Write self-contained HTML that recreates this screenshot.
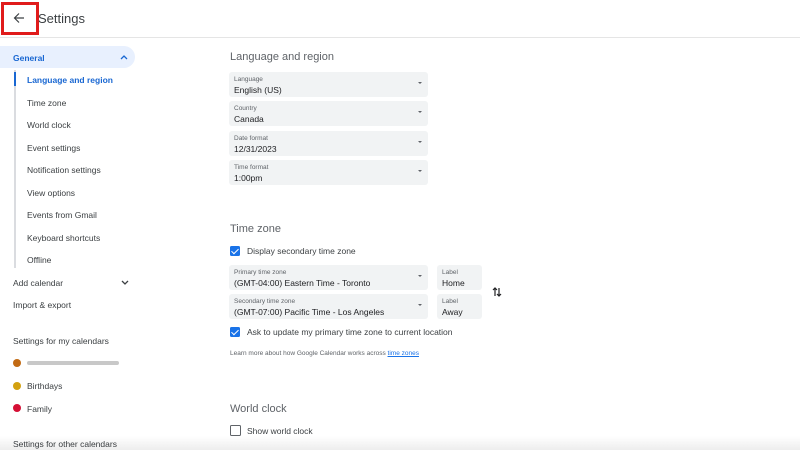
<!DOCTYPE html>
<html><head><style>
*{margin:0;padding:0;box-sizing:border-box}
body{width:800px;height:450px;overflow:hidden;background:#fff;font-family:"Liberation Sans",sans-serif;color:#3c4043;position:relative}
.a{position:absolute;white-space:nowrap}
.nav{font-size:8.5px;color:#3c4043}
.field{position:absolute;background:#f1f3f4;border-radius:3px}
.field .l{position:absolute;left:5px;top:4px;font-size:6.5px;color:#5f6368}
.field .v{position:absolute;left:5px;top:13px;font-size:8.5px;color:#202124}
.field .c{position:absolute;right:6px;top:10px;width:0;height:0;border-left:2px solid transparent;border-right:2px solid transparent;border-top:2.5px solid #5f6368}
h2{position:absolute;font-weight:normal;font-size:11px;color:#5f6368}
.cb{position:absolute;width:10px;height:10px;background:#1a73e8;border-radius:1.5px}
.cb:after{content:"";position:absolute;left:3px;top:1px;width:3px;height:6px;border:solid #fff;border-width:0 1.5px 1.5px 0;transform:rotate(45deg)}
.dot{position:absolute;width:8px;height:8px;border-radius:50%}
</style></head><body>
<div class="a" style="left:0;top:37px;width:800px;height:1px;background:#e5e5e5"></div>
<div class="a" style="left:1px;top:2px;width:38px;height:33px;border:3px solid #e01b1b"></div>
<svg class="a" style="left:13px;top:12px" width="12" height="12" viewBox="0 0 12 12"><path d="M11 6H1.5M6 1.5L1.5 6L6 10.5" stroke="#3c4043" stroke-width="1.2" fill="none"/></svg>
<div class="a" style="left:38px;top:11px;font-size:13px;color:#3c4043">Settings</div>
<div class="a" style="left:0;top:46px;width:135px;height:22px;background:#e8f0fe;border-radius:0 11px 11px 0"></div>
<div class="a nav" style="left:13px;top:53px;color:#1967d2;font-weight:bold">General</div>
<svg class="a" style="left:120px;top:54px" width="8" height="6"><path d="M1 5L4 2L7 5" stroke="#1967d2" stroke-width="1.3" fill="none"/></svg>
<div class="a" style="left:14px;top:70px;width:1.5px;height:198px;background:#dadce0"></div>
<div class="a" style="left:14px;top:72px;width:2px;height:14px;background:#1967d2"></div>
<div class="a nav" style="left:27px;top:75px;color:#1967d2;font-weight:bold">Language and region</div>
<div class="a nav" style="left:27px;top:98px">Time zone</div>
<div class="a nav" style="left:27px;top:120px">World clock</div>
<div class="a nav" style="left:27px;top:143px">Event settings</div>
<div class="a nav" style="left:27px;top:165px">Notification settings</div>
<div class="a nav" style="left:27px;top:188px">View options</div>
<div class="a nav" style="left:27px;top:210px">Events from Gmail</div>
<div class="a nav" style="left:27px;top:233px">Keyboard shortcuts</div>
<div class="a nav" style="left:27px;top:255px">Offline</div>
<div class="a nav" style="left:13px;top:278px">Add calendar</div>
<svg class="a" style="left:121px;top:280px" width="8" height="6"><path d="M1 1L4 4L7 1" stroke="#3c4043" stroke-width="1.3" fill="none"/></svg>
<div class="a nav" style="left:13px;top:300px">Import &amp; export</div>
<div class="a nav" style="left:13px;top:336px;font-size:8.5px">Settings for my calendars</div>
<div class="dot" style="left:13px;top:359px;background:#c26a13"></div>
<div class="a" style="left:27px;top:361px;width:92px;height:4px;background:#c8c8c8;border-radius:2px"></div>
<div class="dot" style="left:13px;top:382px;background:#d3a110"></div>
<div class="a nav" style="left:27px;top:381px">Birthdays</div>
<div class="dot" style="left:13px;top:404px;background:#d50f35"></div>
<div class="a nav" style="left:27px;top:404px">Family</div>
<div class="a nav" style="left:13px;top:439px">Settings for other calendars</div>

<h2 style="left:230px;top:51px">Language and region</h2>
<div class="field" style="left:229px;top:72px;width:199px;height:25px"><div class="l">Language</div><div class="v">English (US)</div><div class="c"></div></div>
<div class="field" style="left:229px;top:101px;width:199px;height:25px"><div class="l">Country</div><div class="v">Canada</div><div class="c"></div></div>
<div class="field" style="left:229px;top:131px;width:199px;height:25px"><div class="l">Date format</div><div class="v">12/31/2023</div><div class="c"></div></div>
<div class="field" style="left:229px;top:160px;width:199px;height:25px"><div class="l">Time format</div><div class="v">1:00pm</div><div class="c"></div></div>

<h2 style="left:230px;top:223px">Time zone</h2>
<div class="cb" style="left:230px;top:246px"></div>
<div class="a nav" style="left:247px;top:246px">Display secondary time zone</div>
<div class="field" style="left:229px;top:265px;width:199px;height:25px"><div class="l">Primary time zone</div><div class="v">(GMT-04:00) Eastern Time - Toronto</div><div class="c"></div></div>
<div class="field" style="left:437px;top:265px;width:45px;height:25px"><div class="l">Label</div><div class="v">Home</div></div>
<div class="field" style="left:229px;top:294px;width:199px;height:25px"><div class="l">Secondary time zone</div><div class="v">(GMT-07:00) Pacific Time - Los Angeles</div><div class="c"></div></div>
<div class="field" style="left:437px;top:294px;width:45px;height:25px"><div class="l">Label</div><div class="v">Away</div></div>
<svg class="a" style="left:492px;top:286px" width="10" height="12" viewBox="0 0 10 12"><path d="M3 10V2M1 4L3 2L5 4M7 2V10M5 8L7 10L9 8" stroke="#202124" stroke-width="1.2" fill="none"/></svg>
<div class="cb" style="left:230px;top:327px"></div>
<div class="a nav" style="left:247px;top:327px">Ask to update my primary time zone to current location</div>
<div class="a" style="left:230px;top:350px;font-size:6.5px;color:#5f6368">Learn more about how Google Calendar works across <span style="color:#1a73e8;text-decoration:underline">time zones</span></div>

<h2 style="left:230px;top:403px">World clock</h2>
<div class="a" style="left:230px;top:425px;width:11px;height:11px;border:1.5px solid #5f6368;border-radius:1.5px"></div>
<div class="a nav" style="left:247px;top:426px">Show world clock</div>
<div class="a" style="left:0;top:436px;width:800px;height:14px;background:linear-gradient(rgba(0,0,0,0),rgba(0,0,0,0.07))"></div>
</body></html>
